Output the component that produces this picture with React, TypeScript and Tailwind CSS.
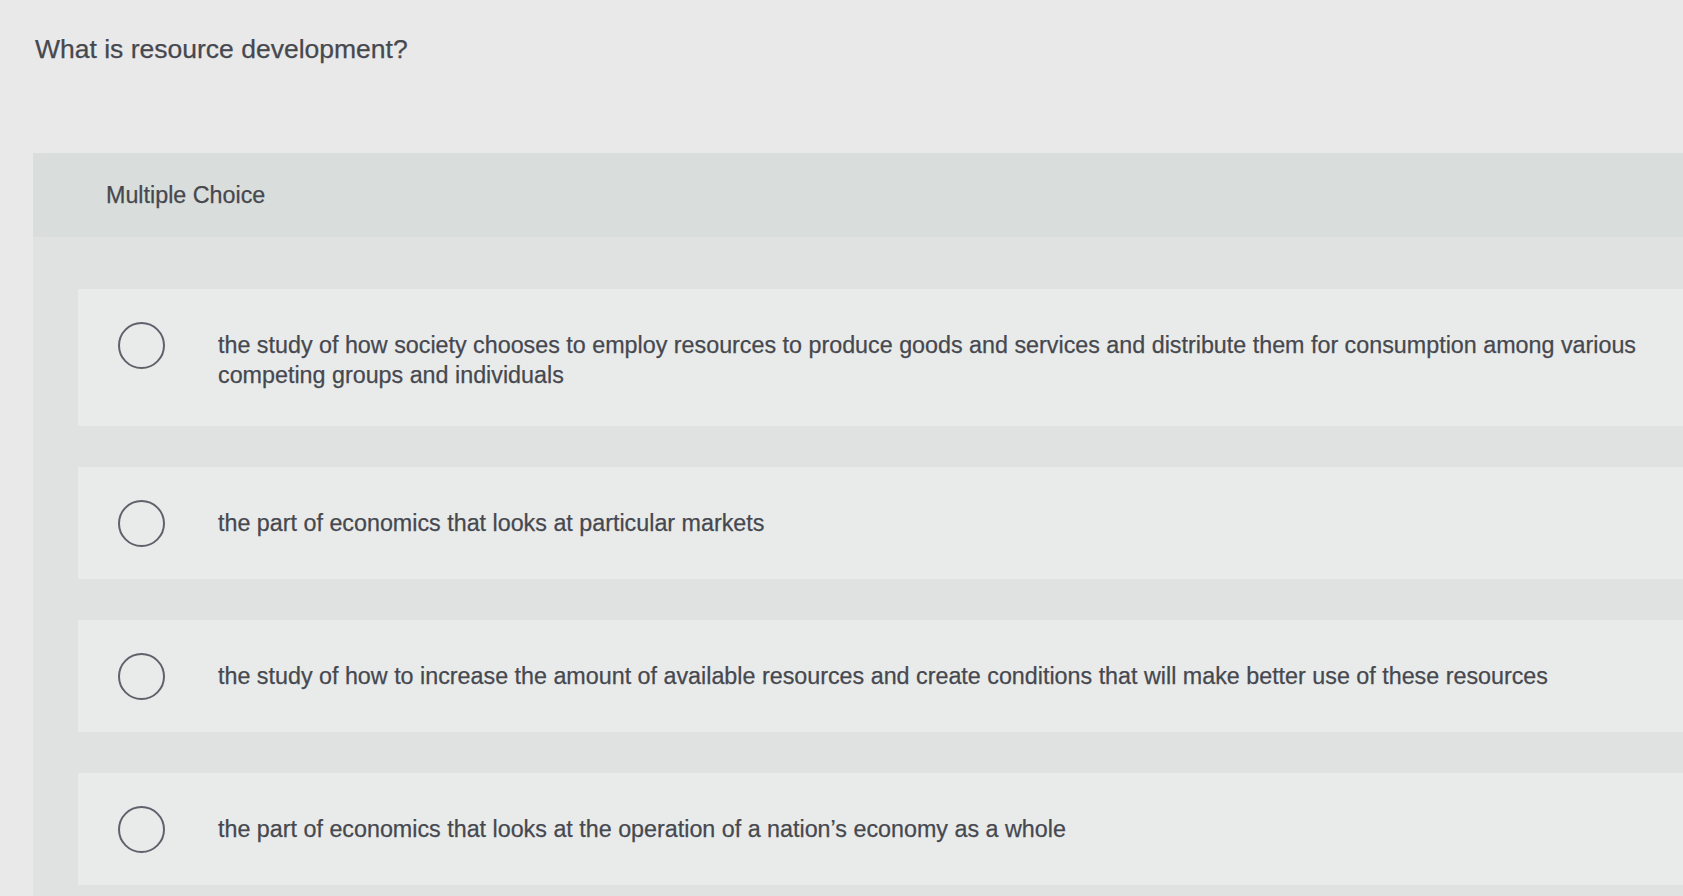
import React from 'react';

const options = [
  'the study of how society chooses to employ resources to produce goods and services and distribute them for consumption among various competing groups and individuals',
  'the part of economics that looks at particular markets',
  'the study of how to increase the amount of available resources and create conditions that will make better use of these resources',
  'the part of economics that looks at the operation of a nation\u2019s economy as a whole',
];

function Option({ text }: { text: string }) {
  return (
    <label className="flex items-start min-h-[112px] bg-[#e9ebea] pt-[41px] pb-[36px] pr-[24px] cursor-pointer">
      {/* radio circle sits centred on the first text line */}
      <div className="h-[30px] flex items-center ml-[40px] shrink-0">
        <span className="block w-[47px] h-[47px] rounded-full border-2 border-[#5f616b]" />
      </div>
      <span className="ml-[53px] text-[23.3px] leading-[30px]">{text}</span>
    </label>
  );
}

export default function App() {
  return (
    <div className="min-h-screen bg-[#e8e9e8] text-[#46484f] font-['Liberation_Sans',Arial,sans-serif] [-webkit-text-stroke:0.25px_#46484f] overflow-hidden">
      <div className="h-[153px] pl-[35px] pt-[31px]">
        <h1 className="text-[26.5px] leading-[36px]">What is resource development?</h1>
      </div>

      <section className="ml-[33px] bg-[#dfe2e1] pb-[14px]">
        <div className="h-[84px] flex items-center pl-[73px] bg-[#d9dddb] text-[23.3px]">
          Multiple Choice
        </div>
        <div className="pt-[52px] pl-[45px] flex flex-col gap-[41px]">
          {options.map((o) => (
            <Option key={o} text={o} />
          ))}
        </div>
      </section>
    </div>
  );
}
